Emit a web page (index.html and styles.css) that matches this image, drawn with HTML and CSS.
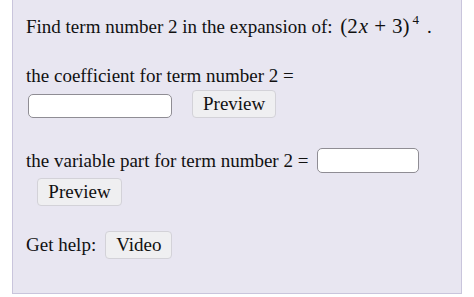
FILE: index.html
```html
<!DOCTYPE html>
<html>
<head>
<meta charset="utf-8">
<link rel="stylesheet" href="styles.css">
</head>
<body>
<div class="panel">
  <p class="line q">Find term number 2 in the expansion of: <span class="math">(2<i class="mi">x</i><span class="op">+</span>3)<span class="sup">4</span></span><span class="dot">.</span></p>
  <p class="line l2">the coefficient for term number 2 =</p>
  <div class="row r1">
    <input class="ans a1" type="text">
    <button class="btn pv1">Preview</button>
  </div>
  <div class="row r2">
    <span class="line">the variable part for term number 2 =</span>
    <input class="ans a2" type="text">
  </div>
  <div class="row r3">
    <button class="btn pv2">Preview</button>
  </div>
  <div class="row r4">
    <span class="line">Get help:</span>
    <button class="btn vid">Video</button>
  </div>
</div>
</body>
</html>
```

FILE: styles.css
```css
html, body {
  margin: 0;
  padding: 0;
  background: #ffffff;
}
body {
  font-family: "Liberation Serif", "Times New Roman", serif;
  font-size: 19px;
  color: #111111;
}
.panel {
  box-sizing: border-box;
  margin-left: 12px;
  width: 450px;
  height: 294px;
  background: #e8e6f1;
  border-left: 1px solid #c9c5dc;
  border-right: 1px solid #c9c5dc;
  border-bottom: 1px solid #c9c5dc;
  padding: 14px 0 0 13px;
}
.line {
  margin: 0;
  line-height: 24px;
  white-space: nowrap;
}
.math {
  font-family: "Liberation Serif", "Times New Roman", serif;
  font-size: 21px;
  margin-left: 3px;
}
.mi {
  font-style: italic;
  margin-left: 1px;
}
.op {
  margin: 0 6px;
}
.sup {
  display: inline-block;
  font-size: 13px;
  line-height: 13px;
  position: relative;
  top: -9px;
  margin-left: 3px;
}
.dot {
  margin-left: 8px;
}
.l2 {
  margin-top: 25px;
}
.row {
  display: flex;
}
.r1 {
  align-items: flex-end;
  margin-top: 2px;
  padding-left: 2px;
  height: 28px;
}
.ans {
  box-sizing: border-box;
  background: #ffffff;
  border: 1px solid #8f8d94;
  border-radius: 5px;
  margin: 0;
  padding: 0;
  font: inherit;
}
.a1 {
  width: 144px;
  height: 24px;
}
.btn {
  box-sizing: border-box;
  font-family: "Liberation Serif", "Times New Roman", serif;
  font-size: 19px;
  color: #111111;
  background: #efeff1;
  border: 1px solid #d3d2d8;
  border-radius: 4px;
  height: 28px;
  padding: 0 10px;
  margin: 0;
  line-height: 26px;
}
.pv1 {
  margin-left: 20px;
  width: 84px;
}
.r2 {
  margin-top: 30px;
  align-items: center;
}
.a2 {
  width: 102px;
  height: 25px;
  margin-left: 9px;
}
.r3 {
  margin-top: 5px;
  padding-left: 11px;
}
.pv2 {
  width: 85px;
}
.r4 {
  margin-top: 25px;
  align-items: center;
}
.vid {
  margin-left: 9px;
  width: 67px;
}
```
